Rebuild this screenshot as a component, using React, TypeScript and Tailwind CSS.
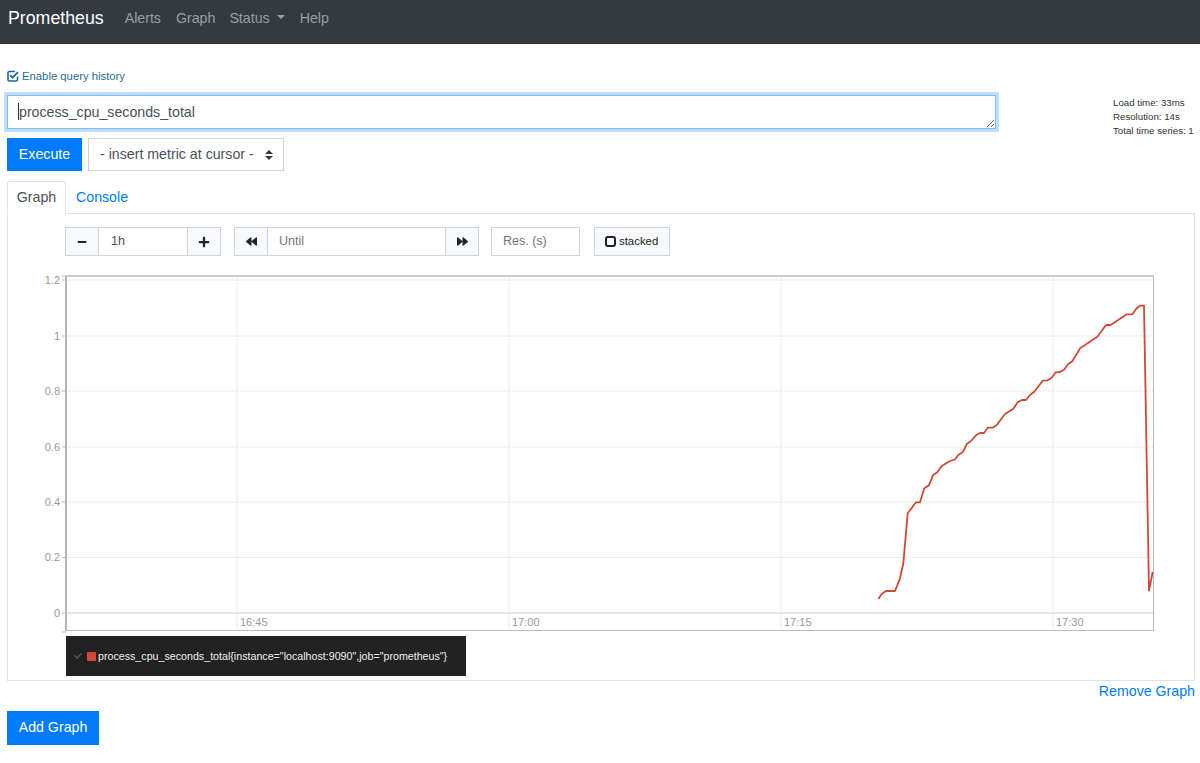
import { FaBackward, FaCheck, FaForward, FaMinus, FaPlus } from 'react-icons/fa'

const series = [
  [878.3, 599], [881.7, 594], [886, 591], [895, 591], [900, 578.3], [903.3, 563.3], [907.7, 513.3],
  [916, 502.3], [920, 502.3], [924.3, 488.3], [929, 485.3], [933.3, 474.7], [937.3, 472.3], [941.7, 466],
  [950, 461], [955, 459.5], [958.3, 455], [962.7, 452.3], [967, 443.7], [971, 441], [976.7, 434.7],
  [980, 433], [984, 433], [987.7, 427.7], [992.7, 427.7], [996.7, 425], [1005, 414], [1013.3, 408.7],
  [1017.7, 402.3], [1021.7, 400], [1026, 400], [1030, 395], [1034.3, 391.7], [1042.7, 380.7], [1047.7, 380.3],
  [1051.7, 377.7], [1055.7, 372.3], [1060, 372], [1064, 369.7], [1068.3, 364], [1072.3, 361.3], [1080.3, 348],
  [1085, 345], [1097.3, 336.7], [1106, 325], [1110.7, 325], [1126.7, 314.3], [1132.3, 314.3], [1136.7, 308.3],
  [1140, 305.7], [1144, 305.7], [1149, 590.7], [1152.7, 572],
]

const yTicks = [
  { y: 280, label: '1.2' },
  { y: 336, label: '1' },
  { y: 391, label: '0.8' },
  { y: 447, label: '0.6' },
  { y: 502, label: '0.4' },
  { y: 557.5, label: '0.2' },
  { y: 613, label: '0' },
]

const xTicks = [
  { x: 237, label: '16:45' },
  { x: 509, label: '17:00' },
  { x: 781, label: '17:15' },
  { x: 1053, label: '17:30' },
]

function Chart() {
  return (
    <svg width="1120" height="364" viewBox="40 272 1120 364" className="block ml-[32px] mt-[16px]">
      {yTicks.map(t => (
        <g key={t.label}>
          <line x1="62" x2="66" y1={t.y} y2={t.y} stroke="#bbb" />
          {t.label === '0'
            ? <line x1="66" x2="1153" y1={t.y} y2={t.y} stroke="#ddd" strokeWidth="1.5" />
            : <line x1="66" x2="1153" y1={t.y} y2={t.y} stroke="#ddd" strokeDasharray="1 1" />}
          <text x="60" y={t.y + 3.5} textAnchor="end" fontSize="11" fill="#9a9a9a">{t.label}</text>
        </g>
      ))}
      {xTicks.map(t => (
        <g key={t.label}>
          <line x1={t.x} x2={t.x} y1="276" y2="630" stroke="#ddd" strokeDasharray="1 1" />
          <text x={t.x + 3} y="626" fontSize="11" fill="#9a9a9a">{t.label}</text>
        </g>
      ))}
      <line x1="62" x2="66" y1="276" y2="276" stroke="#bbb" />
      <line x1="62" x2="66" y1="632" y2="632" stroke="#bbb" />
      <rect x="65.5" y="276" width="1088" height="354.5" fill="none" stroke="#bbb" />
      <line x1="66" x2="66" y1="276" y2="631" stroke="#b5b5b5" strokeWidth="2" />
      <line x1="66" x2="1154" y1="276" y2="276" stroke="#c4c4c4" strokeWidth="1.5" />
      <polyline points={series.map(p => p.join(',')).join(' ')} fill="none" stroke="#cf4a36" strokeWidth="1.8" strokeLinejoin="round" />
    </svg>
  )
}

function HistoryCheck() {
  return (
    <svg width="12" height="12" viewBox="0 0 12 12" fill="none" className="mr-[3px]">
      <path d="M10.5 6.5V9.5a1.5 1.5 0 0 1-1.5 1.5H2.5A1.5 1.5 0 0 1 1 9.5V3a1.5 1.5 0 0 1 1.5-1.5H8" stroke="#1f6a9a" strokeWidth="1.6" />
      <path d="M3.2 5.2 5.6 7.6 11 2.2" stroke="#1f6a9a" strokeWidth="1.9" />
    </svg>
  )
}

export default function App() {
  return (
    <div className="h-[763px] overflow-hidden bg-white text-[14.2px] text-[#212529] font-['Liberation_Sans',Arial,sans-serif]">
      <nav className="flex items-center h-[44px] pb-[6px] pl-[8px] bg-[#343a40] border-b border-[#2a2e33]">
        <span className="text-[17.75px] text-white mr-[21px]">Prometheus</span>
        <a className="text-[rgba(255,255,255,0.5)] mr-[15px]">Alerts</a>
        <a className="text-[rgba(255,255,255,0.5)] mr-[14px]">Graph</a>
        <a className="flex items-center text-[rgba(255,255,255,0.5)] mr-[15px]">
          Status
          <span className="ml-[7px] mt-[-2px] border-x-[4.5px] border-x-transparent border-t-[4.5px] border-t-[rgba(255,255,255,0.5)]" />
        </a>
        <a className="text-[rgba(255,255,255,0.5)]">Help</a>
      </nav>

      <div className="pl-[7px] pr-[5px]">
        <div className="flex items-center h-[16px] mt-[24px] text-[11.3px] text-[#2a6a96]">
          <HistoryCheck />
          Enable query history
        </div>

        <div className="flex mt-[11px] h-[34px]">
          <div className="relative w-[989px] h-[34px]">
            <textarea
              readOnly
              defaultValue="process_cpu_seconds_total"
              className="block w-full h-full px-[11px] py-[6px] text-[14.2px] leading-[20px] text-[#495057] bg-white border border-[#80bdff] shadow-[0_0_0_3px_rgba(0,123,255,0.25)] outline-none"
            />
            <span className="absolute left-[11px] top-[8px] w-px h-[17px] bg-[#333]" />
          </div>
          <div className="ml-auto mt-[1px] text-[9.7px] leading-[14px] text-[#333] w-[82px] whitespace-nowrap">
            <div>Load time: 33ms</div>
            <div>Resolution: 14s</div>
            <div>Total time series: 1</div>
          </div>
        </div>

        <div className="flex gap-[6px] mt-[9px]">
          <button className="w-[75px] h-[33px] bg-[#007bff] text-white border border-[#007bff]">Execute</button>
          <div className="flex items-center w-[196px] h-[33px] pl-[11px] border border-[#ced4da] text-[#495057]">
            - insert metric at cursor -
            <svg width="8" height="10" viewBox="0 0 8 10" className="ml-[11px]" fill="#343a40">
              <path d="M4 0 8 4H0ZM4 10 0 6H8Z" />
            </svg>
          </div>
        </div>

        <div className="flex mt-[10px] h-[32px]">
          <div className="flex items-center justify-center w-[59px] h-[33px] pt-[1px] bg-white border border-[#dee2e6] border-b-white rounded-t-[3px] text-[#495057] mb-[-1px] relative z-10">Graph</div>
          <div className="pl-[10px] h-[32px] pt-[2px] flex items-center text-[#007bff]">Console</div>
        </div>

        <div className="w-[1188px] h-[468px] border border-[#dee2e6]">
          <div className="flex mt-[13px] ml-[57px] h-[29px]">
            <div className="flex border border-[#ced4da] h-full w-[156px]">
              <div className="flex items-center justify-center w-[33px] bg-[#f8f9fa] border-r border-[#ced4da] text-[#212529]"><FaMinus className="text-[10px]" /></div>
              <div className="flex items-center flex-1 pl-[12px] text-[12.5px] text-[#495057]">1h</div>
              <div className="flex items-center justify-center w-[33px] bg-[#f8f9fa] border-l border-[#ced4da] text-[#212529]"><FaPlus className="text-[12px]" /></div>
            </div>
            <div className="flex border border-[#ced4da] h-full w-[245px] ml-[13px]">
              <div className="flex items-center justify-center w-[33px] bg-[#f8f9fa] border-r border-[#ced4da] text-[#212529]"><FaBackward className="text-[11px]" /></div>
              <div className="flex items-center flex-1 pl-[11px] text-[12.5px] text-[#6c757d]">Until</div>
              <div className="flex items-center justify-center w-[33px] bg-[#f8f9fa] border-l border-[#ced4da] text-[#212529]"><FaForward className="text-[11px]" /></div>
            </div>
            <div className="flex items-center w-[89px] ml-[12px] pl-[11px] border border-[#ced4da] text-[12.5px] text-[#6c757d]">Res. (s)</div>
            <div className="flex items-center w-[76px] ml-[14px] pl-[10px] border border-[#ced4da] bg-[#f8f9fa] text-[11.4px] text-[#212529]">
              <span className="w-[11px] h-[11px] mr-[3px] rounded-[3px] border-2 border-[#1b2330]" />
              stacked
            </div>
          </div>

          <Chart />

          <div className="flex items-center w-[400px] h-[40px] ml-[58px] pl-[8px] bg-[#222] text-[10.68px] text-[#eee]">
            <FaCheck className="text-[8px] text-[#555] mr-[5px]" />
            <span className="w-[9px] h-[9px] bg-[#cf4a36] mr-[2px] rounded-[1px]" />
            {'process_cpu_seconds_total{instance="localhost:9090",job="prometheus"}'}
          </div>
        </div>

        <div className="w-[1188px] h-[20px] mt-0 text-right text-[#007bff]">Remove Graph</div>

        <button className="block w-[92px] h-[34px] mt-[10px] bg-[#007bff] text-white border border-[#007bff]">Add Graph</button>
      </div>
    </div>
  )
}
